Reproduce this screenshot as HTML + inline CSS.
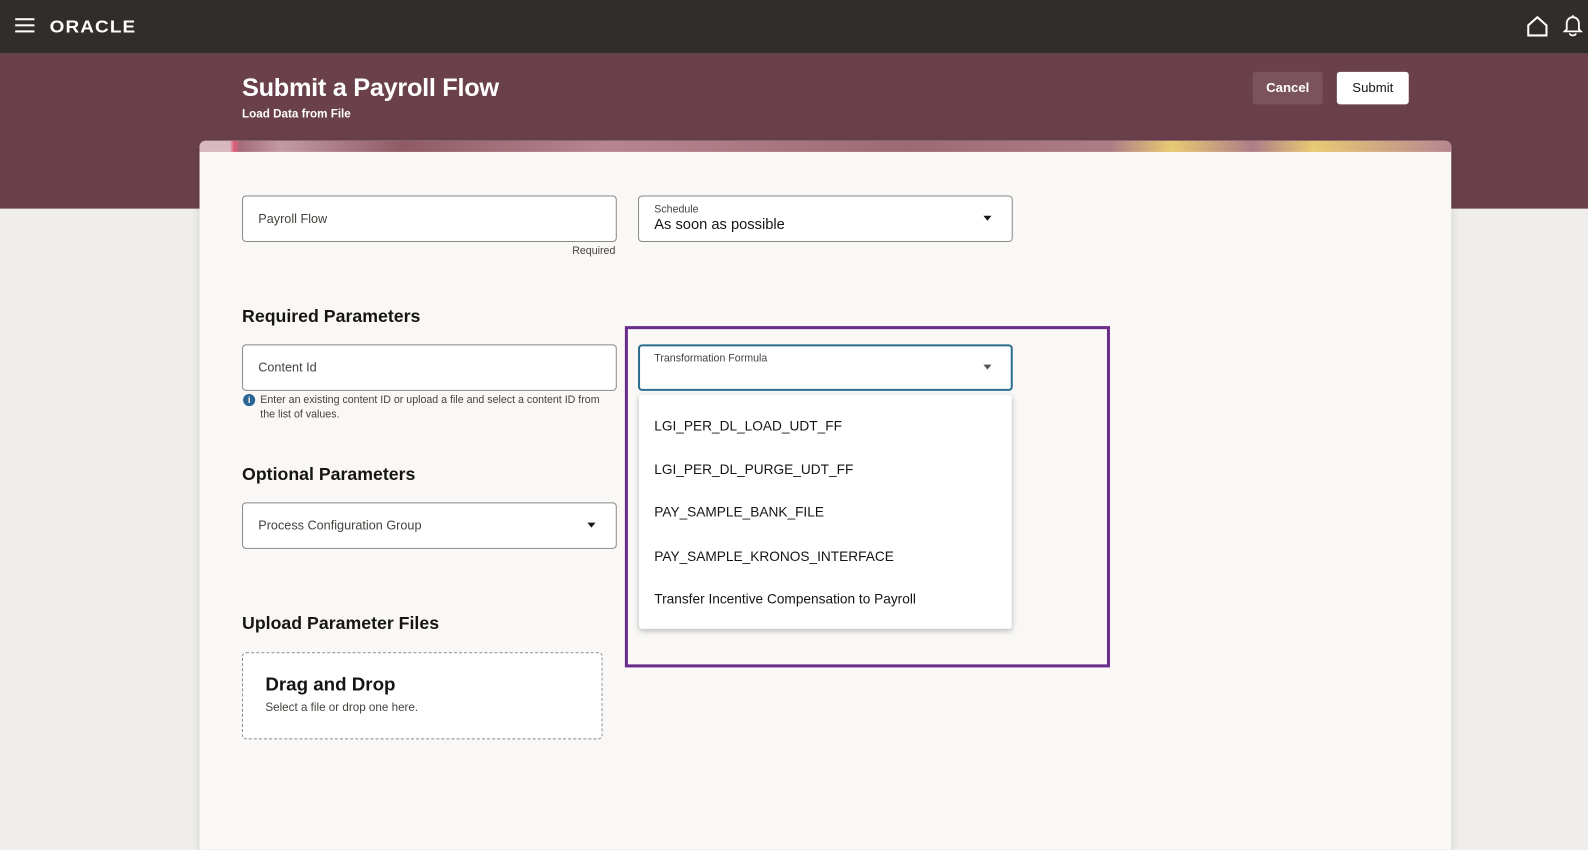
<!DOCTYPE html>
<html><head><style>
*{box-sizing:border-box;margin:0;padding:0}
body{width:1588px;height:824px;overflow:hidden;background:#efeeec;font-family:"Liberation Sans",sans-serif;position:relative;color:#161513}
#w{position:absolute;left:0;top:0;width:1568px;height:814px;transform:scale(1.01276);transform-origin:0 0}
.top{position:absolute;left:0;top:0;width:1568px;height:53px;background:#312d2a}
.banner{position:absolute;left:0;top:53px;width:1568px;height:153px;background:#6a404b}
.card{position:absolute;left:197px;top:139px;width:1236px;height:700px;background:#f9f8f6;border-radius:6px 6px 0 0;overflow:hidden;box-shadow:0 2px 8px rgba(0,0,0,.15)}
.strip{position:absolute;left:0;top:0;width:1236px;height:11px;background:linear-gradient(90deg,#d9b7bf 0,#d9b7bf 30px,#e05c78 34px,#a46b7a 40px,#c29aa4 80px,#8f5a66 200px,#b68591 400px,#9c6a74 700px,#ad7d87 900px,#e8cb73 960px,#ad7d87 1040px,#e8cb73 1100px,#b68591 1236px)}
.in{position:absolute;background:#fff;border:1px solid #8b8986;border-radius:4px}
.lbl{position:absolute;font-size:12px;color:#46423e}
.tri{position:absolute;width:0;height:0;border-left:4.5px solid transparent;border-right:4.5px solid transparent;border-top:5px solid #161513}
h2{position:absolute;font-size:17.5px;font-weight:bold;color:#161513}
.opt{position:absolute;left:646px;font-size:13.5px;color:#161513}
</style></head><body><div id="w">
<div class="top">
 <div style="position:absolute;left:15px;top:18px;width:19px;height:2px;background:#fff;box-shadow:0 6px 0 #fff,0 12px 0 #fff"></div>
 <div style="position:absolute;left:49px;top:17px;color:#fff;font-size:17px;letter-spacing:1px;font-weight:bold;transform:scaleX(1.1);transform-origin:left">ORACLE</div>
 <svg style="position:absolute;left:1507px;top:15px" width="22" height="22" viewBox="0 0 22 22"><path d="M2 10 L11 2 L20 10 V20 H2 Z" fill="none" stroke="#fff" stroke-width="2"/></svg>
 <svg style="position:absolute;left:1543px;top:14px" width="20" height="22" viewBox="0 0 20 22"><path d="M4 15 V9 A6 6 0 0 1 16 9 V15 L18 17 H2 Z M10 1 V3 M7 19 A3 2 0 0 0 13 19" fill="none" stroke="#fff" stroke-width="1.8"/></svg>
</div>
<div class="banner">
 <div style="position:absolute;left:239px;top:20px;color:#fff;font-size:25px;font-weight:bold;letter-spacing:-0.3px">Submit a Payroll Flow</div>
 <div style="position:absolute;left:239px;top:54px;color:#fff;font-size:11.5px;font-weight:bold">Load Data from File</div>
 <div style="position:absolute;left:1237px;top:18px;width:69px;height:32px;background:#7b535c;border-radius:3px;color:#fff;font-size:13px;font-weight:bold;text-align:center;line-height:32px">Cancel</div>
 <div style="position:absolute;left:1320px;top:18px;width:71px;height:32px;background:#fff;border-radius:3px;color:#161513;font-size:13px;text-align:center;line-height:32px">Submit</div>
</div>
<div class="card"><div class="strip"></div></div>

<div class="in" style="left:239px;top:193px;width:370px;height:46px"></div>
<div class="lbl" style="left:255px;top:209px;font-size:12.5px">Payroll Flow</div>
<div class="lbl" style="left:565px;top:242px;font-size:10.5px">Required</div>
<div class="in" style="left:630px;top:193px;width:370px;height:46px"></div>
<div class="lbl" style="left:646px;top:201px;font-size:10.5px">Schedule</div>
<div style="position:absolute;left:646px;top:214px;font-size:14.5px">As soon as possible</div>
<div class="tri" style="left:971px;top:213px"></div>

<h2 style="left:239px;top:302px">Required Parameters</h2>
<div class="in" style="left:239px;top:340px;width:370px;height:46px"></div>
<div class="lbl" style="left:255px;top:356px;font-size:12.5px">Content Id</div>
<div style="position:absolute;left:240px;top:389px;width:12px;height:12px;border-radius:50%;background:#2b6593;color:#fff;font-size:9px;text-align:center;line-height:12px;font-weight:bold">i</div>
<div class="lbl" style="left:257px;top:388px;font-size:10.5px;line-height:14px;width:345px">Enter an existing content ID or upload a file and select a content ID from the list of values.</div>

<div style="position:absolute;left:617px;top:322px;width:479px;height:337px;border:3px solid #6b2d8c"></div>
<div class="in" style="left:630px;top:340px;width:370px;height:46px;border:2px solid #2c6c8e"></div>
<div class="lbl" style="left:646px;top:348px;font-size:10.5px">Transformation Formula</div>
<div class="tri" style="left:971px;top:360px;border-top-color:#555"></div>
<div style="position:absolute;left:631px;top:390px;width:368px;height:231px;background:#fff;border-radius:3px;box-shadow:0 2px 6px rgba(0,0,0,.25)"></div>
<div class="opt" style="top:413px">LGI_PER_DL_LOAD_UDT_FF</div>
<div class="opt" style="top:456px">LGI_PER_DL_PURGE_UDT_FF</div>
<div class="opt" style="top:498px">PAY_SAMPLE_BANK_FILE</div>
<div class="opt" style="top:542px">PAY_SAMPLE_KRONOS_INTERFACE</div>
<div class="opt" style="top:584px">Transfer Incentive Compensation to Payroll</div>

<h2 style="left:239px;top:458px">Optional Parameters</h2>
<div class="in" style="left:239px;top:496px;width:370px;height:46px"></div>
<div class="lbl" style="left:255px;top:512px;font-size:12.5px">Process Configuration Group</div>
<div class="tri" style="left:580px;top:516px"></div>

<h2 style="left:239px;top:605px">Upload Parameter Files</h2>
<div style="position:absolute;left:239px;top:644px;width:356px;height:86px;border:1px dashed #8b8986;border-radius:4px;background:#fff"></div>
<div style="position:absolute;left:262px;top:665px;font-size:18.5px;font-weight:bold">Drag and Drop</div>
<div class="lbl" style="left:262px;top:693px;font-size:11.5px">Select a file or drop one here.</div>
</div></body></html>
